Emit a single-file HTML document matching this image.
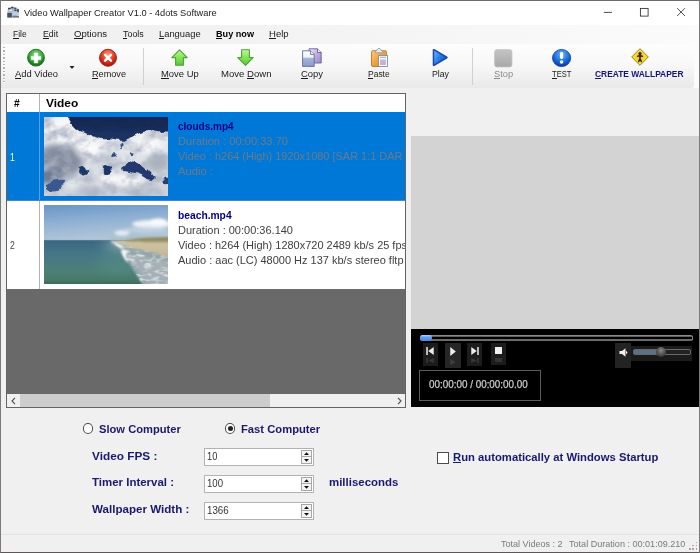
<!DOCTYPE html>
<html lang="en"><head><meta charset="utf-8"><title>Video Wallpaper Creator V1.0 - 4dots Software</title>
<style>
html,body{margin:0;padding:0}
body{width:700px;height:553px;position:relative;overflow:hidden;background:#f0f0f0;font-family:"Liberation Sans",sans-serif}
.a{position:absolute;box-sizing:border-box}
.t{position:absolute;white-space:nowrap;transform-origin:0 50%;line-height:normal;font-family:"Liberation Sans",sans-serif}
.t u{text-decoration:underline;text-underline-offset:1px;text-decoration-thickness:1px}
svg{position:absolute;overflow:visible}

</style></head><body>
<!-- window frame -->
<div class="a" style="left:0;top:0;width:700px;height:553px;border:1px solid #7a7a7a;border-top-color:#6c6c6c;border-bottom-color:#5c5656;z-index:9"></div>
<!-- title bar -->
<div class="a" style="left:1px;top:1px;width:698px;height:24px;background:#fff"></div>
<!-- app icon -->
<svg style="left:7px;top:6px" width="13" height="12" viewBox="0 0 13 12">
 <defs><filter id="bi" x="-20%" y="-20%" width="140%" height="140%"><feGaussianBlur stdDeviation="0.45"/></filter></defs>
 <g filter="url(#bi)">
 <path d="M1 2.500L5 0.500 9.500 1.500 12 4V11.500H0.300V7z" fill="#a9b7c6"/>
 <rect x="1.200" y="1.800" width="2.400" height="1.600" fill="#2e3440"/>
 <rect x="4.200" y="0.800" width="2.200" height="1.500" fill="#3a4250"/>
 <rect x="7.200" y="1.800" width="2" height="1.500" fill="#4a5466"/>
 <rect x="7.500" y="3.600" width="2" height="1.500" fill="#3c4658"/>
 <rect x="2" y="3.600" width="3" height="1.400" fill="#e4ebf2"/>
 <path d="M10 3.500L11.800 2.800V6.500L10.500 6z" fill="#39414d"/>
 <rect x="0.300" y="7" width="4.500" height="4.500" fill="#4b5058"/>
 <rect x="5.200" y="5.500" width="4.500" height="4" fill="#b9d0e2"/>
 <rect x="5.500" y="9.800" width="6.500" height="1.700" fill="#6c7884"/>
 <rect x="9.800" y="6.500" width="2.400" height="3.500" fill="#c8d2dc"/>
 </g>
</svg>
<!-- window controls -->
<svg style="left:603px;top:7px" width="84" height="11" viewBox="0 0 84 11">
 <path d="M0.800 5.400H9" stroke="#2e2e2e" stroke-width="0.850" fill="none"/>
 <rect x="37.400" y="1.400" width="7.700" height="7.700" stroke="#2e2e2e" stroke-width="0.850" fill="none"/>
 <path d="M74.200 1.200L82 9M82 1.200L74.200 9" stroke="#2e2e2e" stroke-width="0.850" fill="none"/>
</svg>
<!-- menu bar -->
<div class="a" style="left:1px;top:25px;width:698px;height:19px;background:linear-gradient(90deg,#efefef,#f4f4f4 50%,#fbfbfb)"></div>
<!-- toolbar -->
<div class="a" style="left:1px;top:44px;width:698px;height:44px;background:linear-gradient(90deg,#efefef,#f4f4f4 50%,#fbfbfb)"></div>
<div class="a" style="left:1px;top:44px;width:693px;height:44px;border-radius:0 3px 3px 0;background:linear-gradient(#fdfdfd,#f8f8f8 45%,#e9e9e9)"></div>
<div class="a" style="left:3px;top:47px;width:2px;height:37px;background:repeating-linear-gradient(#b4b4b4 0 1.300px,#fdfdfd 1.300px 2.200px,transparent 2.200px 3.400px)"></div>
<div class="a" style="left:143px;top:48px;width:1px;height:37px;background:#d0d0d0"></div>
<div class="a" style="left:472px;top:48px;width:1px;height:37px;background:#d0d0d0"></div>
<!-- dropdown arrow -->
<svg style="left:69px;top:66px" width="6" height="3" viewBox="0 0 6 3"><path d="M0.5 0H5.5L3 3Z" fill="#222"/></svg>

<!-- ICONS -->
<!-- add -->
<svg style="left:27px;top:48.500px" width="18" height="18" viewBox="0 0 18 18">
 <defs><radialGradient id="gAdd" cx="0.5" cy="0.3" r="0.75"><stop offset="0" stop-color="#86dc80"/><stop offset="0.55" stop-color="#2ea42e"/><stop offset="1" stop-color="#0a5c12"/></radialGradient></defs>
 <circle cx="9" cy="8.700" r="8.400" fill="url(#gAdd)" stroke="#176a1a" stroke-width="0.900"/>
 <path d="M7.200 4h3.600v3.200h3.200v3.600h-3.200v3.200H7.200v-3.200H4V7.200h3.200z" fill="#fff" stroke="#e8f8e8" stroke-width="0.500" stroke-linejoin="round"/>
</svg>
<!-- remove -->
<svg style="left:99.200px;top:48.500px" width="18" height="18" viewBox="0 0 18 18">
 <defs><radialGradient id="gRem" cx="0.5" cy="0.3" r="0.75"><stop offset="0" stop-color="#ff9474"/><stop offset="0.55" stop-color="#de3420"/><stop offset="1" stop-color="#8e0e06"/></radialGradient></defs>
 <circle cx="9" cy="8.800" r="8.500" fill="url(#gRem)" stroke="#9c1c0e" stroke-width="0.900"/>
 <path d="M6.100 5.800L11.900 11.600M11.900 5.800L6.100 11.600" stroke="#fff" stroke-width="2.500" stroke-linecap="round" fill="none"/>
</svg>
<!-- move up -->
<svg style="left:170.500px;top:49px" width="17" height="17" viewBox="0 0 17 17">
 <defs><linearGradient id="gUp" x1="0" y1="0" x2="0" y2="1"><stop offset="0" stop-color="#c2f8a0"/><stop offset="0.5" stop-color="#86e456"/><stop offset="1" stop-color="#58c63c"/></linearGradient></defs>
 <path d="M8.500 0.800L16.200 8.600H12.400V16.300H4.600V8.600H0.800z" fill="url(#gUp)" stroke="#48a82e" stroke-width="1.100" stroke-linejoin="round"/>
</svg>
<!-- move down -->
<svg style="left:236.800px;top:49px" width="17" height="17" viewBox="0 0 17 17">
 <path d="M8.500 16.300L16.200 8.500H12.400V0.800H4.600V8.500H0.800z" fill="url(#gUp)" stroke="#48a82e" stroke-width="1.100" stroke-linejoin="round"/>
</svg>
<!-- copy -->
<svg style="left:302px;top:48px" width="20" height="19" viewBox="0 0 20 19">
 <defs><linearGradient id="gCb" x1="0" y1="0" x2="1" y2="1"><stop offset="0" stop-color="#f4f0fa"/><stop offset="0.45" stop-color="#c4b2e0"/><stop offset="1" stop-color="#9c86c8"/></linearGradient>
 <linearGradient id="gCf" x1="0" y1="0" x2="0" y2="1"><stop offset="0" stop-color="#ffffff"/><stop offset="0.4" stop-color="#eef2fa"/><stop offset="0.5" stop-color="#a4b2da"/><stop offset="1" stop-color="#8c9ccc"/></linearGradient></defs>
 <path d="M7 0.800h8.500l3.700 3.700v10.500h-12.200z" fill="url(#gCb)" stroke="#6c5c9c" stroke-width="0.900"/>
 <path d="M15.500 0.800v3.700h3.700" fill="#efeaf8" stroke="#6c5c9c" stroke-width="0.900"/>
 <path d="M0.600 2.800h8l3.600 3.600v12h-11.600z" fill="url(#gCf)" stroke="#5c6c9e" stroke-width="0.900"/>
 <path d="M8.600 2.800v3.600h3.600" fill="#fff" stroke="#5c6c9e" stroke-width="0.900"/>
</svg>
<!-- paste -->
<svg style="left:370.500px;top:48px" width="17" height="19" viewBox="0 0 17 19">
 <defs><linearGradient id="gPa" x1="0" y1="0" x2="1" y2="1"><stop offset="0" stop-color="#fbd080"/><stop offset="0.5" stop-color="#f2a23a"/><stop offset="1" stop-color="#dc8418"/></linearGradient></defs>
 <rect x="0.500" y="2.700" width="15" height="15.800" rx="1.500" fill="url(#gPa)" stroke="#b87a24" stroke-width="0.900"/>
 <path d="M4 4.800c0-1.500 0.800-2.300 2-2.500c0.200-1.200 0.900-1.800 2-1.800s1.800 0.600 2 1.800c1.200 0.200 2 1 2 2.500z" fill="#e8e8ec" stroke="#8e8e98" stroke-width="0.800"/>
 <rect x="7.500" y="7.500" width="9" height="11" fill="#fbfbfe" stroke="#868cb0" stroke-width="0.900"/>
 <rect x="9" y="11.500" width="6" height="5.500" fill="#b4bce6"/>
 <rect x="9" y="14.500" width="6" height="2.500" fill="#e0a8b8"/>
 <path d="M9 9.300h6" stroke="#99a" stroke-width="0.900"/>
</svg>
<!-- play -->
<svg style="left:432px;top:48px" width="17" height="19" viewBox="0 0 17 19">
 <defs><linearGradient id="gPl" x1="0" y1="0" x2="1" y2="0.600"><stop offset="0" stop-color="#74b6fa"/><stop offset="0.5" stop-color="#2a80ee"/><stop offset="1" stop-color="#1458cc"/></linearGradient></defs>
 <path d="M1.800 2L14.600 9.500 1.800 17z" fill="url(#gPl)" stroke="#1a4cae" stroke-width="2.200" stroke-linejoin="round"/>
 <path d="M2.300 2.800L13.600 9.500 2.300 16.200z" fill="url(#gPl)"/>
</svg>
<!-- stop -->
<svg style="left:494px;top:48.500px" width="19" height="19" viewBox="0 0 19 19">
 <defs><linearGradient id="gSt" x1="0" y1="0" x2="0" y2="1"><stop offset="0" stop-color="#c4c4c4"/><stop offset="1" stop-color="#a8a8a8"/></linearGradient></defs>
 <rect x="0.700" y="0.700" width="17.200" height="17.200" rx="2.200" fill="url(#gSt)" stroke="#bcbcbc" stroke-width="0.800"/>
</svg>
<!-- test -->
<svg style="left:552px;top:48.500px" width="19" height="18" viewBox="0 0 19 18">
 <defs><radialGradient id="gTe" cx="0.500" cy="0.300" r="0.750"><stop offset="0" stop-color="#6eb6ff"/><stop offset="0.550" stop-color="#1c6cdc"/><stop offset="1" stop-color="#062e96"/></radialGradient></defs>
 <ellipse cx="9.600" cy="9" rx="9.100" ry="8.600" fill="url(#gTe)" stroke="#0c3ea4" stroke-width="0.800"/>
 <rect x="8" y="3" width="3.200" height="7" rx="1.400" fill="#fff"/>
 <circle cx="9.600" cy="13" r="1.800" fill="#fff"/>
</svg>
<!-- create wallpaper -->
<svg style="left:631px;top:48px" width="18" height="18" viewBox="0 0 18 18">
 <path d="M9 0.700L17.300 9 9 17.300 0.700 9z" fill="#f6d21e" stroke="#96841a" stroke-width="1" stroke-linejoin="round"/>
 <path d="M9 2.300L15.700 9 9 15.700 2.300 9z" fill="none" stroke="#fbe670" stroke-width="0.800"/>
 <circle cx="9" cy="5.600" r="1.600" fill="#2a2410"/>
 <path d="M9 7v4M6.800 8.300l2.200-0.600 2.200 0.600M9 10.800l-1.300 2.700M9 10.800l1.300 2.700" stroke="#2a2410" stroke-width="1.500" fill="none" stroke-linecap="round"/>
</svg>

<!-- LIST -->
<div class="a" style="left:6px;top:93px;width:400px;height:315px;border:1px solid #646464;background:#696969"></div>
<div class="a" style="left:7px;top:94px;width:398px;height:18px;background:#fff"></div>
<div class="a" style="left:7px;top:112px;width:398px;height:89px;background:#0078d7"></div>
<div class="a" style="left:7px;top:201px;width:398px;height:88px;background:#fff"></div>
<div class="a" style="left:39px;top:94px;width:1px;height:195px;background:#b4b4b4"></div>
<div class="a" style="left:39px;top:112px;width:1px;height:89px;background:#52a2ee"></div>
<div class="a" style="left:7px;top:200px;width:398px;height:1px;background:#3a8ad8"></div>
<!-- thumbs -->
<!-- clouds thumb -->
<svg style="left:44px;top:117px" width="124" height="79" viewBox="0 0 124 79">
 <defs>
  <filter id="b1" x="-20%" y="-20%" width="140%" height="140%"><feGaussianBlur stdDeviation="1.6"/></filter>
  <filter id="b2" x="-60%" y="-60%" width="220%" height="220%"><feGaussianBlur stdDeviation="3"/></filter>
  <filter id="b3" x="-20%" y="-20%" width="140%" height="140%"><feGaussianBlur stdDeviation="0.8"/></filter>
  <filter id="puff" x="-10%" y="-10%" width="120%" height="120%"><feTurbulence type="fractalNoise" baseFrequency="0.11" numOctaves="2" seed="4" result="n"/><feDisplacementMap in="SourceGraphic" in2="n" scale="7" xChannelSelector="R" yChannelSelector="G"/><feGaussianBlur stdDeviation="0.7"/></filter>
  <filter id="tex" x="0" y="0" width="100%" height="100%"><feTurbulence type="fractalNoise" baseFrequency="0.07 0.09" numOctaves="3" seed="11"/><feColorMatrix type="matrix" values="0 0 0 0 0.40  0 0 0 0 0.44  0 0 0 0 0.54  2.6 0 0 0 -1.05"/><feGaussianBlur stdDeviation="0.6"/></filter>
  <clipPath id="c1"><rect width="124" height="79"/></clipPath>
  <linearGradient id="sky1" x1="0" y1="0" x2="0" y2="1"><stop offset="0" stop-color="#12214a"/><stop offset="1" stop-color="#1d3566"/></linearGradient>
  <linearGradient id="cl1" x1="0" y1="0" x2="0" y2="1"><stop offset="0" stop-color="#eff1f4"/><stop offset="0.6" stop-color="#dde1e7"/><stop offset="1" stop-color="#ccd1da"/></linearGradient>
 </defs>
 <g clip-path="url(#c1)">
  <rect width="124" height="79" fill="url(#cl1)"/>
  <!-- shadows -->
  <g filter="url(#b2)">
   <ellipse cx="15" cy="44" rx="24" ry="17" fill="#858e9f"/>
   <ellipse cx="6" cy="60" rx="14" ry="8" fill="#6c7a94"/>
   <ellipse cx="114" cy="46" rx="12" ry="9" fill="#a6acb8" opacity="0.9"/>
   <ellipse cx="60" cy="42" rx="14" ry="5" fill="#b4bac6" opacity="0.7"/>
   <ellipse cx="46" cy="74" rx="14" ry="4" fill="#a8b0be" opacity="0.8"/>
   <ellipse cx="100" cy="75" rx="20" ry="4" fill="#b4bac6" opacity="0.8"/>
  </g>
  <!-- highlights -->
  <g filter="url(#b2)">
   <ellipse cx="20" cy="14" rx="16" ry="11" fill="#fbfbfb"/>
   <ellipse cx="46" cy="32" rx="14" ry="8" fill="#fafafb"/>
   <ellipse cx="104" cy="27" rx="14" ry="8" fill="#f8f8fa"/>
   <ellipse cx="76" cy="63" rx="24" ry="5" fill="#fcfcfc"/>
   <ellipse cx="28" cy="67" rx="6" ry="3.500" fill="#f4f4f6"/>
  </g>
  <rect width="124" height="79" filter="url(#tex)" opacity="0.85"/>
  <!-- sky -->
  <g filter="url(#puff)">
   <path d="M19 -8C23 0 27 6 32 11C37 15 42 17 48 19C53 21 58 23 64 22C70 23 76 25 80 23C84 20 90 19 96 16C102 14 108 14 112 15C116 14 120 13 135 14V-8Z" fill="url(#sky1)"/>
  </g>
  <!-- blue gaps -->
  <g filter="url(#puff)">
   <path d="M36 49C39 47 42 49 43 52C46 53 46 57 43 58C40 59 36 58 35 55Z" fill="#1d3768"/>
   <path d="M58 51C61 49 65 49 67 51C69 53 66 56 63 56C60 56 57 54 58 51Z" fill="#1c3566"/>
   <path d="M78 51C82 48 86 45 91 44C96 46 100 50 104 54C108 58 111 61 109 63C104 63 100 59 95 57C90 55 84 55 79 54Z" fill="#21396e"/>
   <ellipse cx="70" cy="38" rx="2.800" ry="1.800" fill="#324c7e"/>
   <ellipse cx="87" cy="37" rx="2.500" ry="2" fill="#324c7e"/>
   <ellipse cx="77" cy="28" rx="1.500" ry="3" fill="#3c5484"/>
   <ellipse cx="122.500" cy="63" rx="3" ry="3.500" fill="#274272"/>
   <path d="M2 66C8 63 14 62 22 63C20 68 16 72 12 75C8 76 4 75 2 72Z" fill="#38598f"/>
  </g>
 </g>
</svg>
<!-- beach thumb -->
<svg style="left:44px;top:205px" width="124" height="79" viewBox="0 0 124 79">
 <defs>
  <filter id="bb1" filterUnits="userSpaceOnUse" x="-20" y="-20" width="170" height="120"><feGaussianBlur stdDeviation="1.6"/></filter>
  <filter id="bb2" filterUnits="userSpaceOnUse" x="-20" y="-20" width="170" height="120"><feGaussianBlur stdDeviation="3.5"/></filter>
  <filter id="bb4" filterUnits="userSpaceOnUse" x="-40" y="-40" width="210" height="160"><feGaussianBlur stdDeviation="8 4"/></filter>
  <filter id="bb3" filterUnits="userSpaceOnUse" x="-20" y="-20" width="170" height="120"><feGaussianBlur stdDeviation="0.8"/></filter>
  <clipPath id="c2"><rect width="124" height="79"/></clipPath>
  <linearGradient id="sky2" x1="0" y1="0" x2="0.250" y2="1"><stop offset="0" stop-color="#6a95c6"/><stop offset="0.500" stop-color="#90b1d3"/><stop offset="1" stop-color="#b4c7d8"/></linearGradient>
  <linearGradient id="sea2" x1="0" y1="0" x2="0" y2="1"><stop offset="0" stop-color="#3a6680"/><stop offset="0.300" stop-color="#457688"/><stop offset="0.700" stop-color="#4c8076"/><stop offset="0.880" stop-color="#487a68"/><stop offset="1" stop-color="#3c6458"/></linearGradient>
  <linearGradient id="seaL" x1="0" y1="0" x2="1" y2="0"><stop offset="0.300" stop-color="#9ab4b4" stop-opacity="0"/><stop offset="0.700" stop-color="#9ab4b4" stop-opacity="0.600"/></linearGradient>
  <linearGradient id="sand2" x1="0" y1="0" x2="0" y2="1"><stop offset="0" stop-color="#cfc5a4"/><stop offset="1" stop-color="#c0b494"/></linearGradient>
  <filter id="tex2" x="0" y="0" width="100%" height="100%"><feTurbulence type="fractalNoise" baseFrequency="0.12 0.3" numOctaves="2" seed="3"/><feColorMatrix type="matrix" values="0 0 0 0 0.95  0 0 0 0 0.97  0 0 0 0 0.97  2.4 0 0 0 -1.1"/><feGaussianBlur stdDeviation="0.5"/></filter>
  <clipPath id="surfc"><path d="M66 36L130 36V79H98C94 72 90 66 86 60C82 54 78 50 78 45C74 41 70 38 66 36Z"/></clipPath>
 </defs>
 <g clip-path="url(#c2)">
  <rect width="124" height="36" fill="url(#sky2)"/>
  <rect y="35" width="124" height="45" fill="url(#sea2)"/>
  <ellipse cx="92" cy="40" rx="30" ry="8" fill="#9ab6b6" opacity="0.750" filter="url(#bb4)"/><ellipse cx="74" cy="58" rx="20" ry="12" fill="#5a9088" opacity="0.450" filter="url(#bb4)"/>
  <!-- clouds -->
  <g filter="url(#bb1)">
   <ellipse cx="108" cy="19" rx="20" ry="4" fill="#eef2f6"/>
   <ellipse cx="114" cy="16.500" rx="9" ry="3" fill="#fafbfc"/>
   <ellipse cx="78" cy="28" rx="7.500" ry="2.800" fill="#e6ecf2"/>
   <ellipse cx="102" cy="25" rx="22" ry="3" fill="#c4d4e4" opacity="0.800"/>
  </g>
  <!-- surf -->
  <g filter="url(#bb3)">
   <path d="M66 36L130 36V84H100C96 74 90 66 86 60C82 54 78 50 78 45C74 41 70 38 66 36Z" fill="#94a6ac"/>
   <path d="M84 50C92 50 104 52 130 58V84H106C100 72 90 60 84 50Z" fill="#a4b0b6"/>
  </g>
  <rect x="60" y="36" width="64" height="43" filter="url(#tex2)" clip-path="url(#surfc)" opacity="0.800"/>
  <g filter="url(#bb3)">
   <path d="M66 36.500C70 38.500 73 40.500 77 43.500L80 42.500C76 39.500 72 37.500 68 36.500Z" fill="#f2f5f5"/>
   <path d="M77 45C78 50 80 54 84 58L83 53C81 49 82 47 86 46.500L80 44.500Z" fill="#f4f7f7"/>
   <!-- sand -->
   <path d="M68 36H130V54C116 49 104 46 92 44C84 42 76 39 68 36Z" fill="url(#sand2)"/>
   <!-- dunes -->
   <path d="M82 36C90 33.500 100 32.500 130 32V36.500H80Z" fill="#8f8b5e"/>
   <path d="M95 36.500H130V38H100Z" fill="#a89c70" opacity="0.700"/>
  </g>
  <rect y="34.500" width="70" height="1" fill="#9ab2c4" opacity="0.500"/>
 </g>
</svg>

<div class="a" style="left:405px;top:94px;width:1px;height:313px;background:#646464;z-index:5"></div>
<div class="a" style="left:406px;top:94px;width:5px;height:314px;background:#f0f0f0;z-index:5"></div>
<!-- hscroll -->
<div class="a" style="left:7px;top:394px;width:398px;height:13px;background:#f0f0f0"></div>
<div class="a" style="left:20px;top:394px;width:250px;height:13px;background:#cdcdcd"></div>
<svg style="left:10.500px;top:396.500px" width="5" height="8" viewBox="0 0 5 8"><path d="M4 0.800L1 4 4 7.200" stroke="#555" stroke-width="1.200" fill="none"/></svg>
<svg style="left:396.500px;top:396.500px" width="5" height="8" viewBox="0 0 5 8"><path d="M1 0.800L4 4 1 7.200" stroke="#555" stroke-width="1.200" fill="none"/></svg>

<!-- PLAYER -->
<div class="a" style="left:411px;top:136px;width:288px;height:194px;background:#d3d3d3"></div>
<div class="a" style="left:411px;top:329px;width:288px;height:78px;background:#000"></div>
<!-- seek -->
<div class="a" style="left:420px;top:335px;width:273px;height:6px;border-radius:2.500px;background:linear-gradient(#7a7a7a,#9c9c9c 18%,#000 36%,#000 60%,#8a8a8a 80%,#5a5a5a)"></div>
<div class="a" style="left:691.500px;top:336px;width:1.500px;height:4px;background:#8a8a8a;border-radius:1px"></div>
<div class="a" style="left:419.500px;top:334.500px;width:12.500px;height:6.500px;border-radius:3px;background:linear-gradient(#b4d6fc,#5c9eee 40%,#4a8ae0)"></div>
<!-- buttons -->
<div class="a" style="left:423px;top:343px;width:15px;height:23px;background:#1c1c1c"></div>
<div class="a" style="left:445px;top:343px;width:16px;height:25px;background:#262626"></div>
<div class="a" style="left:467px;top:343px;width:15px;height:23px;background:#1c1c1c"></div>
<div class="a" style="left:491px;top:343px;width:15px;height:22px;background:#1c1c1c"></div>
<svg style="left:426px;top:347px" width="8" height="8" viewBox="0 0 9 9"><path d="M0.300 0v9h1.700v-9zM8.700 0v9L2.500 4.500z" fill="#ececec"/></svg>
<svg style="left:426px;top:358px;opacity:0.13" width="8" height="5" viewBox="0 0 9 9" preserveAspectRatio="none"><path d="M0.300 0v9h1.700v-9zM8.700 0v9L2.500 4.500z" fill="#e8e8e8"/></svg>
<svg style="left:449.700px;top:347px" width="6" height="9" viewBox="0 0 7 10" preserveAspectRatio="none"><path d="M0.300 0v10L6.800 5z" fill="#ececec"/></svg>
<svg style="left:449.700px;top:359px;opacity:0.13" width="6" height="6" viewBox="0 0 7 10" preserveAspectRatio="none"><path d="M0.300 0v10L6.800 5z" fill="#e8e8e8"/></svg>
<svg style="left:470.500px;top:347px" width="8" height="8" viewBox="0 0 9 9"><path d="M8.700 0v9h-1.700v-9zM0.300 0v9L6.500 4.500z" fill="#ececec"/></svg>
<svg style="left:470.500px;top:358px;opacity:0.13" width="8" height="5" viewBox="0 0 9 9" preserveAspectRatio="none"><path d="M8.700 0v9h-1.700v-9zM0.300 0v9L6.500 4.500z" fill="#e8e8e8"/></svg>
<div class="a" style="left:495px;top:347px;width:7px;height:6.500px;background:#efefef"></div>
<div class="a" style="left:495px;top:357.500px;width:7px;height:4px;background:#333"></div>
<!-- time box -->
<div class="a" style="left:419px;top:370px;width:122px;height:31px;border:1px solid #5c5c5c"></div>
<!-- volume -->
<div class="a" style="left:615px;top:343px;width:16px;height:25px;background:#232323"></div>
<div class="a" style="left:631px;top:346px;width:61px;height:15px;background:#1b1b1b"></div>
<svg style="left:619px;top:348px" width="9" height="9" viewBox="0 0 9 9"><path d="M0.500 3h2.500L6.500 0.300v8.400L3 6H0.500z" fill="#f0f0f0"/><path d="M7 2.500L8.500 4.500 7 6.500" fill="#f0f0f0"/></svg>
<div class="a" style="left:633px;top:349px;width:58px;height:6px;border:1px solid #6a6a6a;border-radius:2px;background:#222"></div>
<div class="a" style="left:634px;top:350px;width:28px;height:4px;background:#5d6f80"></div>
<div class="a" style="left:656px;top:347px;width:10px;height:10px;border-radius:5px;background:radial-gradient(circle at 50% 35%,#8a8a8a,#3c3c3c 70%)"></div>

<!-- BOTTOM -->
<div class="a" style="left:83px;top:423.400px;width:10.300px;height:10.400px;border:1px solid #4a4a4a;border-radius:50%;background:#fff"></div>
<div class="a" style="left:225px;top:423.400px;width:10.300px;height:10.400px;border:1px solid #4a4a4a;border-radius:50%;background:#fff"></div>
<div class="a" style="left:227.800px;top:426.200px;width:5px;height:5px;border-radius:50%;background:#222"></div>
<!-- spinners -->
<div class="a" style="left:204px;top:448px;width:110px;height:18px;border:1px solid #b2b2b2;background:#fff"></div>
<div class="a" style="left:301px;top:450px;width:11px;height:7px;border:1px solid #a8a8a8;background:#f3f3f3"></div>
<div class="a" style="left:301px;top:457px;width:11px;height:7px;border:1px solid #a8a8a8;border-top:none;background:#f3f3f3"></div>
<svg style="left:304px;top:452px" width="5" height="3" viewBox="0 0 5 3"><path d="M0 3L2.500 0.300 5 3z" fill="#111"/></svg>
<svg style="left:304px;top:459px" width="5" height="3" viewBox="0 0 5 3"><path d="M0 0L2.500 2.700 5 0z" fill="#111"/></svg>
<div class="a" style="left:204px;top:475px;width:110px;height:18px;border:1px solid #b2b2b2;background:#fff"></div>
<div class="a" style="left:301px;top:477px;width:11px;height:7px;border:1px solid #a8a8a8;background:#f3f3f3"></div>
<div class="a" style="left:301px;top:484px;width:11px;height:7px;border:1px solid #a8a8a8;border-top:none;background:#f3f3f3"></div>
<svg style="left:304px;top:479px" width="5" height="3" viewBox="0 0 5 3"><path d="M0 3L2.500 0.300 5 3z" fill="#111"/></svg>
<svg style="left:304px;top:486px" width="5" height="3" viewBox="0 0 5 3"><path d="M0 0L2.500 2.700 5 0z" fill="#111"/></svg>
<div class="a" style="left:204px;top:502px;width:110px;height:18px;border:1px solid #b2b2b2;background:#fff"></div>
<div class="a" style="left:301px;top:504px;width:11px;height:7px;border:1px solid #a8a8a8;background:#f3f3f3"></div>
<div class="a" style="left:301px;top:511px;width:11px;height:7px;border:1px solid #a8a8a8;border-top:none;background:#f3f3f3"></div>
<svg style="left:304px;top:506px" width="5" height="3" viewBox="0 0 5 3"><path d="M0 3L2.500 0.300 5 3z" fill="#111"/></svg>
<svg style="left:304px;top:513px" width="5" height="3" viewBox="0 0 5 3"><path d="M0 0L2.500 2.700 5 0z" fill="#111"/></svg>
<!-- checkbox -->
<div class="a" style="left:437px;top:452px;width:11.500px;height:11.500px;border:1px solid #4c4c4c;background:#fff"></div>
<!-- status -->
<div class="a" style="left:689px;top:548px;width:1.500px;height:1.500px;background:#a8a8a8"></div>
<div class="a" style="left:692.3px;top:548px;width:1.500px;height:1.500px;background:#a8a8a8"></div>
<div class="a" style="left:695.6px;top:548px;width:1.500px;height:1.500px;background:#a8a8a8"></div>
<div class="a" style="left:692.3px;top:544.8px;width:1.500px;height:1.500px;background:#a8a8a8"></div>
<div class="a" style="left:695.6px;top:544.8px;width:1.500px;height:1.500px;background:#a8a8a8"></div>
<div class="a" style="left:695.6px;top:541.6px;width:1.500px;height:1.500px;background:#a8a8a8"></div>
<div class="a" style="left:1px;top:534px;width:698px;height:1px;background:#e3e3e3"></div>

<span class="t" id="t0" style="left:24.3px;top:6.8px;font-size:9.7px;color:#1a1a1a;transform:scaleX(0.9568)">Video Wallpaper Creator V1.0 - 4dots Software</span>
<div class="a" style="left:13.4px;top:38.4px;width:5.2px;height:1px;background:#1a1a1a"></div>
<span class="t" id="t1" style="left:13.4px;top:27.8px;font-size:9.7px;color:#1a1a1a;transform:scaleX(0.8704)">File</span>
<div class="a" style="left:42.9px;top:38.4px;width:5.8px;height:1px;background:#1a1a1a"></div>
<span class="t" id="t2" style="left:42.9px;top:27.8px;font-size:9.7px;color:#1a1a1a;transform:scaleX(0.9040)">Edit</span>
<div class="a" style="left:74.0px;top:38.4px;width:7.5px;height:1px;background:#1a1a1a"></div>
<span class="t" id="t3" style="left:74.0px;top:27.8px;font-size:9.7px;color:#1a1a1a;transform:scaleX(0.9883)">Options</span>
<div class="a" style="left:122.9px;top:38.4px;width:4.5px;height:1px;background:#1a1a1a"></div>
<span class="t" id="t4" style="left:122.9px;top:27.8px;font-size:9.7px;color:#1a1a1a;transform:scaleX(0.9193)">Tools</span>
<div class="a" style="left:159.0px;top:38.4px;width:5.2px;height:1px;background:#1a1a1a"></div>
<span class="t" id="t5" style="left:159.0px;top:27.8px;font-size:9.7px;color:#1a1a1a;transform:scaleX(0.9650)">Language</span>
<div class="a" style="left:215.7px;top:38.4px;width:6.6px;height:1px;background:#000"></div>
<span class="t" id="t6" style="left:215.7px;top:27.8px;font-size:9.7px;color:#000;font-weight:bold;transform:scaleX(0.9412)">Buy now</span>
<div class="a" style="left:269.0px;top:38.4px;width:6.9px;height:1px;background:#1a1a1a"></div>
<span class="t" id="t7" style="left:269.0px;top:27.8px;font-size:9.7px;color:#1a1a1a;transform:scaleX(0.9831)">Help</span>
<div class="a" style="left:15.0px;top:77.8px;width:6.2px;height:1px;background:#1a1a1a"></div>
<span class="t" id="t8" style="left:15.0px;top:68.3px;font-size:9.7px;color:#1a1a1a;transform:scaleX(0.9656)">Add Video</span>
<div class="a" style="left:91.6px;top:77.8px;width:6.6px;height:1px;background:#1a1a1a"></div>
<span class="t" id="t9" style="left:91.6px;top:68.3px;font-size:9.7px;color:#1a1a1a;transform:scaleX(0.9424)">Remove</span>
<div class="a" style="left:160.9px;top:77.8px;width:7.9px;height:1px;background:#1a1a1a"></div>
<span class="t" id="t10" style="left:160.9px;top:68.3px;font-size:9.7px;color:#1a1a1a;transform:scaleX(0.9725)">Move Up</span>
<div class="a" style="left:246.9px;top:77.8px;width:6.9px;height:1px;background:#1a1a1a"></div>
<span class="t" id="t11" style="left:220.9px;top:68.3px;font-size:9.7px;color:#1a1a1a;transform:scaleX(0.9872)">Move Down</span>
<div class="a" style="left:301.4px;top:77.8px;width:6.8px;height:1px;background:#1a1a1a"></div>
<span class="t" id="t12" style="left:301.4px;top:68.3px;font-size:9.7px;color:#1a1a1a;transform:scaleX(0.9724)">Copy</span>
<div class="a" style="left:367.7px;top:77.8px;width:5.7px;height:1px;background:#1a1a1a"></div>
<span class="t" id="t13" style="left:367.7px;top:68.3px;font-size:9.7px;color:#1a1a1a;transform:scaleX(0.8757)">Paste</span>
<span class="t" id="t14" style="left:432.0px;top:68.3px;font-size:9.7px;color:#1a1a1a;transform:scaleX(0.9014)">Play</span>
<div class="a" style="left:494.3px;top:77.8px;width:6.2px;height:1px;background:#8a8a8a"></div>
<span class="t" id="t15" style="left:494.3px;top:68.3px;font-size:9.7px;color:#8a8a8a;transform:scaleX(0.9580)">Stop</span>
<div class="a" style="left:552.0px;top:77.8px;width:4.6px;height:1px;background:#1a1a1a"></div>
<span class="t" id="t16" style="left:552.0px;top:68.3px;font-size:9.7px;color:#1a1a1a;transform:scaleX(0.7833)">TEST</span>
<div class="a" style="left:595.3px;top:77.8px;width:6.1px;height:1px;background:#15157c"></div>
<span class="t" id="t17" style="left:595.3px;top:68.3px;font-size:9.7px;color:#15157c;font-weight:bold;transform:scaleX(0.8684)">CREATE WALLPAPER</span>
<span class="t" id="t18" style="left:14.3px;top:96.6px;font-size:10.6px;color:#000;font-weight:bold;transform:scaleX(0.9651)">#</span>
<span class="t" id="t19" style="left:46.0px;top:96.6px;font-size:10.6px;color:#000;font-weight:bold;transform:scaleX(1.1272)">Video</span>
<span class="t" id="t20" style="left:9.6px;top:151.0px;font-size:11px;color:#fff;transform:scaleX(0.7837)">1</span>
<span class="t" id="t21" style="left:9.9px;top:239.4px;font-size:11px;color:#444;transform:scaleX(0.7837)">2</span>
<span class="t" id="t22" style="left:178.0px;top:121.0px;font-size:10.4px;color:#00008b;font-weight:bold;transform:scaleX(0.9628)">clouds.mp4</span>
<span class="t" id="t23" style="left:178.0px;top:135.0px;font-size:10.6px;color:#6e7a86;transform:scaleX(1.0492)">Duration : 00:00:33.70</span>
<span class="t" id="t24" style="left:178.0px;top:150.0px;font-size:10.6px;color:#6e7a86;transform:scaleX(1.0340)">Video : h264 (High) 1920x1080 [SAR 1:1 DAR</span>
<span class="t" id="t25" style="left:178.0px;top:165.0px;font-size:10.6px;color:#6e7a86;transform:scaleX(1.0611)">Audio :</span>
<span class="t" id="t26" style="left:178.0px;top:209.6px;font-size:10.4px;color:#00008b;font-weight:bold;transform:scaleX(0.9872)">beach.mp4</span>
<span class="t" id="t27" style="left:178.0px;top:223.6px;font-size:10.6px;color:#404040;transform:scaleX(1.0385)">Duration : 00:00:36.140</span>
<span class="t" id="t28" style="left:178.0px;top:238.8px;font-size:10.6px;color:#404040;transform:scaleX(1.0350)">Video : h264 (High) 1280x720 2489 kb/s 25 fps</span>
<span class="t" id="t29" style="left:178.0px;top:253.6px;font-size:10.6px;color:#404040;transform:scaleX(1.0378)">Audio : aac (LC) 48000 Hz 137 kb/s stereo fltp</span>
<span class="t" id="t30" style="left:429.0px;top:378.1px;font-size:11px;color:#cfcfcf;-webkit-text-stroke:0.25px #cfcfcf;transform:scaleX(0.8973)">00:00:00 / 00:00:00.00</span>
<span class="t" id="t31" style="left:98.6px;top:423.4px;font-size:11px;color:#191970;font-weight:bold;transform:scaleX(1.0140)">Slow Computer</span>
<span class="t" id="t32" style="left:241.0px;top:423.4px;font-size:11px;color:#191970;font-weight:bold;transform:scaleX(1.0203)">Fast Computer</span>
<span class="t" id="t33" style="left:91.6px;top:450.0px;font-size:11px;color:#191970;font-weight:bold;transform:scaleX(1.0735)">Video FPS :</span>
<span class="t" id="t34" style="left:91.6px;top:476.3px;font-size:11px;color:#191970;font-weight:bold;transform:scaleX(1.0423)">Timer Interval :</span>
<span class="t" id="t35" style="left:91.6px;top:503.4px;font-size:11px;color:#191970;font-weight:bold;transform:scaleX(1.0542)">Wallpaper Width :</span>
<span class="t" id="t36" style="left:329.0px;top:476.0px;font-size:11px;color:#191970;font-weight:bold;transform:scaleX(1.0414)">milliseconds</span>
<div class="a" style="left:453.3px;top:461.8px;width:8.2px;height:1px;background:#191970"></div>
<span class="t" id="t37" style="left:453.3px;top:450.6px;font-size:11px;color:#191970;font-weight:bold;transform:scaleX(1.0251)">Run automatically at Windows Startup</span>
<span class="t" id="t38" style="left:206.5px;top:450.2px;font-size:10.8px;color:#333;transform:scaleX(0.8572)">10</span>
<span class="t" id="t39" style="left:206.5px;top:477.2px;font-size:10.8px;color:#333;transform:scaleX(0.8937)">100</span>
<span class="t" id="t40" style="left:206.5px;top:504.2px;font-size:10.8px;color:#333;transform:scaleX(0.9030)">1366</span>
<span class="t" id="t41" style="left:501.4px;top:537.6px;font-size:9.6px;color:#7a7a7a;transform:scaleX(0.9414)">Total Videos : 2</span>
<span class="t" id="t42" style="left:568.6px;top:537.6px;font-size:9.6px;color:#7a7a7a;transform:scaleX(0.9447)">Total Duration : 00:01:09.210</span>
</body></html>
